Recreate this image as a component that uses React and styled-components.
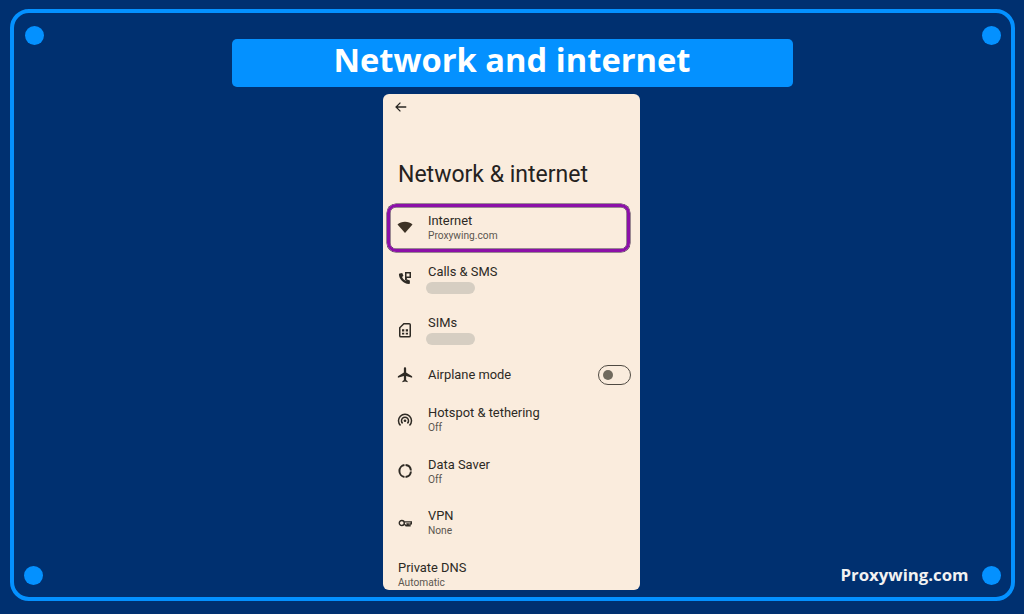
import React from "react";
import styled, { createGlobalStyle } from "styled-components";

const Global = createGlobalStyle`
  html, body { margin: 0; padding: 0; background: #003070; }
  #root { width: 1024px; height: 614px; overflow: hidden; }
`;
const Page = styled.div`
  width: 1024px; height: 614px; box-sizing: border-box; padding: 9px 9px 13px 10px; background: #003070;
`;
const Frame = styled.div`
  position: relative; height: 100%; box-sizing: border-box; border: 4px solid #0491ff; border-radius: 19px;
  display: flex; flex-direction: column; align-items: center; padding-top: 26px;
`;
const Dot = styled.span`
  position: absolute; width: 19px; height: 19px; border-radius: 50%; background: #0491ff;
  left: ${p => p.$right ? "968px" : p.$bottom ? "9.500px" : "10.500px"};
  top: ${p => p.$bottom ? "552.500px" : "12.500px"};
`;
const Banner = styled.h1`
  width: 561px; height: 48px; margin: 0 0 7px -1px; border-radius: 5px; background: #0491ff; color: #fff;
  display: flex; align-items: center; justify-content: center; padding-bottom: 6px; box-sizing: border-box;
  font: 700 32.700px/1 "Open Sans", sans-serif;
`;
const Phone = styled.div`
  width: 257px; height: 496px; margin-left: -3px; background: #faecdd; border-radius: 6px; overflow: hidden; flex: none;
  color: #1f1c18; font-family: Roboto, sans-serif; display: flex; flex-direction: column;
`;
const TopBar = styled.div`
  flex: none; height: 26px; box-sizing: border-box; padding: 0 0 0 11px; display: flex; align-items: center;
`;
const Heading = styled.h2`
  flex: none; margin: 0; height: 81.250px; padding: 26.750px 0 0 15.500px; display: flex; align-items: center; box-sizing: border-box;
  font: 400 23px/1 Roboto, sans-serif; color: #25221e;
`;
const Row = styled.div`
  flex: none; height: ${p => p.$h || 51.5}px; box-sizing: border-box; display: flex; align-items: center; padding-left: ${p => p.$plain ? 15.5 : 45.5}px; position: relative;
`;
const Highlight = styled.span`
  position: absolute; left: 4px; top: 3px; width: 243px; height: 48px; box-sizing: border-box; border: 3px solid #8c10a8; border-radius: 9px;
  box-shadow: 0 0 0 .5px #3a2446, inset 0 0 0 .5px #3a2446;
`;
const IconSlot = styled.span`
  position: absolute; left: 13.500px; top: 50%; transform: translateY(-50%); width: 18px; height: 18px; display: flex; align-items: center; justify-content: center; color: #2e2a24;
`;
const Texts = styled.div`
  display: flex; flex-direction: column; gap: 1px;
`;
const Title = styled.div`
  font-size: 12.900px; line-height: 15px; color: #2c2924; white-space: nowrap;
`;
const Sub = styled.div`
  font-size: 10.200px; line-height: 13px; color: #5b564f; white-space: nowrap;
`;
const Redacted = styled.div`
  width: 49px; height: 12px; margin: 2px 0 0 -2px; border-radius: 6px; background: #d6cec2;
`;
const Toggle = styled.span`
  position: absolute; left: 215px; top: 50%; transform: translateY(-50%); width: 33px; height: 20px; box-sizing: border-box;
  border: 1.500px solid #4f4a42; border-radius: 10px; display: flex; align-items: center; padding-left: 4px;
`;
const Knob = styled.span`
  width: 10px; height: 10px; border-radius: 50%; background: #706a5e;
`;
const Watermark = styled.div`
  position: absolute; left: 826.500px; top: 552px; color: #f2f2f2; font: 700 16.800px/19px "Open Sans", sans-serif; white-space: nowrap;
`;

const Ico = ({ children, size = 18, view = "0 0 24 24" }) => (
  <svg width={size} height={size} viewBox={view} fill="currentColor" aria-hidden="true">{children}</svg>
);

const Back = () => (
  <svg width="14" height="14" viewBox="0 0 24 24" fill="none" stroke="#2a2723" strokeWidth="2.200">
    <path d="M21 12H4M11 4.500 3.500 12l7.500 7.500" />
  </svg>
);
const Wifi = () => (
  <Ico><path fill="#3d3226" d="M12 20 2 8.600C4.600 6.400 8 5 12 5s7.400 1.400 10 3.600z" /></Ico>
);
const Calls = () => (
  <Ico>
    <path d="M5 4.500 8.300 4l1.600 3.700-1.800 1.700c.9 2.200 2.600 3.900 4.800 4.900l1.900-1.800 3.700 1.500v3.400c0 .8-.6 1.300-1.400 1.300C9.800 18.400 4 12.100 3.900 5.800c0-.7.400-1.200 1.100-1.300z" />
    <path fillRule="evenodd" d="M12 2.500h8v8h-5.500v3H12zm2 2v4h4v-4z" />
  </Ico>
);
const Sim = () => (
  <Ico>
    <path fillRule="evenodd" d="M10 2.500h7.500A2.500 2.500 0 0 1 20 5v14.500a2.500 2.500 0 0 1-2.500 2.500h-11A2.500 2.500 0 0 1 4 19.500V8.500zm.8 2L6 9.300v10.200c0 .3.200.5.500.5h11c.3 0 .500-.2.500-.5V5c0-.3-.2-.5-.5-.5z" />
    <path d="M8 11h3v3H8zM13 11h3v3h-3zM8 15.500h3v2.500H8zM13 15.500h3v2.500h-3z" />
  </Ico>
);
const Plane = () => (
  <Ico><path d="M21.500 15.800v-2l-8-5V3.300c0-.8-.7-1.500-1.500-1.500s-1.500.7-1.500 1.500v5.500l-8 5v2l8-2.500v5.500l-2 1.500v1.500l3.500-1 3.500 1v-1.500l-2-1.500v-5.500z" /></Ico>
);
const Hotspot = () => (
  <svg width="18" height="18" viewBox="0 0 24 24" fill="none" stroke="currentColor" strokeWidth="2">
    <circle cx="12" cy="13" r="1.800" fill="currentColor" stroke="none" />
    <path d="M8.800 16.500a4.700 4.700 0 1 1 6.400 0M6 19.300a8.700 8.700 0 1 1 12 0" />
  </svg>
);
const DataSaver = () => (
  <svg width="18" height="18" viewBox="0 0 24 24" fill="none" stroke="currentColor" strokeWidth="2.600">
    <path d="M12.700 4.100a8 8 0 0 1 7.200 7.200M19.900 12.700a8 8 0 0 1-7.200 7.200M11.300 19.900a8 8 0 0 1 0-15.800" />
  </svg>
);
const Key = () => (
  <svg width="14" height="14" viewBox="0 0 24 24" fill="none" stroke="currentColor" strokeWidth="2.400">
    <circle cx="6.500" cy="12" r="4.300" />
    <path d="M10.800 10h12v3.500h-2.300V17h-3v-3.500h-2V17h-1.700l-3-3.500" />
  </svg>
);

const rows = [
  { title: "Calls & SMS", icon: <Calls />, redacted: true },
  { title: "SIMs", icon: <Sim />, redacted: true },
  { title: "Airplane mode", icon: <Plane />, h: 38, toggle: true },
  { title: "Hotspot & tethering", sub: "Off", icon: <Hotspot /> },
  { title: "Data Saver", sub: "Off", icon: <DataSaver /> },
  { title: "VPN", sub: "None", icon: <Key /> },
];

export default function App() {
  return (
    <Page>
      <Global />
      <Frame>
        <Dot /><Dot $right /><Dot $bottom /><Dot $right $bottom />
        <Banner>Network and internet</Banner>
        <Phone>
          <TopBar><Back /></TopBar>
          <Heading>Network &amp; internet</Heading>
          <Row>
            <Highlight />
            <IconSlot><Wifi /></IconSlot>
            <Texts><Title>Internet</Title><Sub>Proxywing.com</Sub></Texts>
          </Row>
          {rows.map(r => (
            <Row key={r.title} $h={r.h}>
              <IconSlot>{r.icon}</IconSlot>
              <Texts>
                <Title>{r.title}</Title>
                {r.sub && <Sub>{r.sub}</Sub>}
                {r.redacted && <Redacted />}
              </Texts>
              {r.toggle && <Toggle><Knob /></Toggle>}
            </Row>
          ))}
          <Row $plain>
            <Texts><Title>Private DNS</Title><Sub>Automatic</Sub></Texts>
          </Row>
        </Phone>
        <Watermark>Proxywing.com</Watermark>
      </Frame>
    </Page>
  );
}
